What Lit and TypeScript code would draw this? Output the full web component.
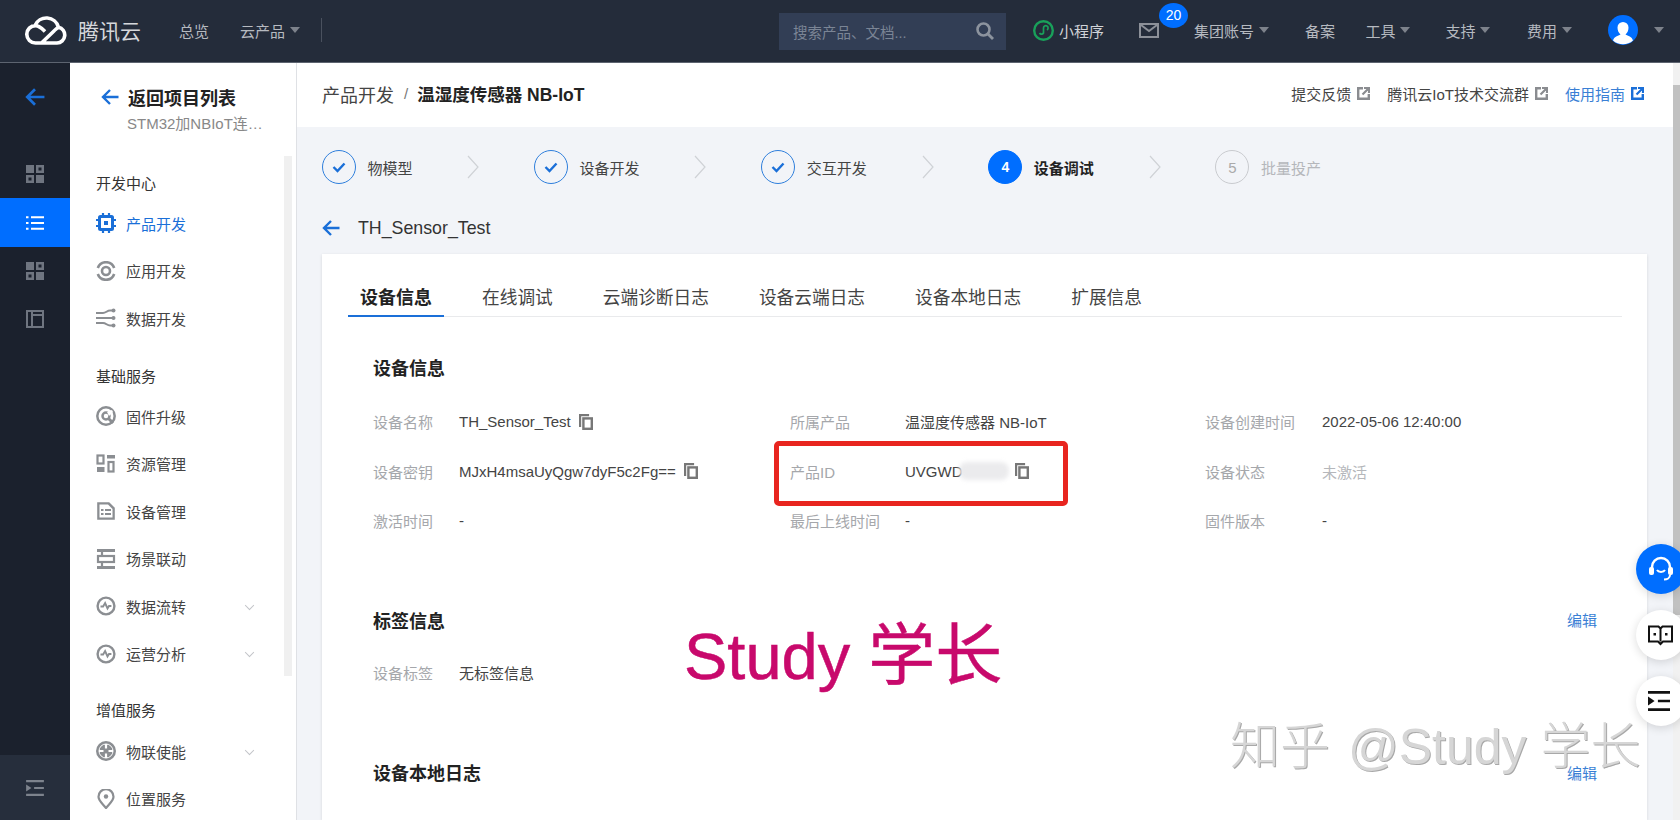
import { LitElement, html, css, svg } from "lit";
import { customElement } from "lit/decorators.js";

const ico = (w: number, h: number, vb: string, body: unknown, cls = "") =>
  html`<svg class="ic ${cls}" width=${w} height=${h} viewBox=${vb} fill="none">${body}</svg>`;

const caret = html`<i class="caret"></i>`;

const copy = ico(14, 16, "0 0 14 16", svg`<path d="M1.100 13V1.100h9" stroke="#777" stroke-width="2.200"/><rect x="4.400" y="4.400" width="8.400" height="10.400" stroke="#777" stroke-width="2.400"/>`, "copy");

const ext = (c: string) => ico(13, 13, "0 0 13 13", svg`<path d="M6 1.200H1.200v10.600h10.600V7" stroke=${c} stroke-width="2.400"/><path d="M5.500 7.500 11 2M7 1h5v5" stroke=${c} stroke-width="2.200"/>`);

const grid = ico(18, 18, "0 0 18 18", svg`<rect width="8" height="8" fill="#6f7580"/><rect x="10" width="8" height="8" fill="#6f7580"/><rect y="10" width="8" height="8" fill="#6f7580"/><rect x="10" y="10" width="8" height="8" fill="#6f7580"/><rect x="12.500" y="2.500" width="3" height="3" fill="#1b212d"/><rect x="2.500" y="12.500" width="3" height="3" fill="#1b212d"/>`);

const g = "#8b8e92";
const wave = svg`<circle cx="10" cy="10" r="8.400" stroke=${g} stroke-width="2.400"/><path d="M4.500 10.500h2.600l2-3.500 2.400 5.500 1.500-2.500h2.400" stroke=${g} stroke-width="1.900"/>`;
const icons: Record<string, unknown> = {
  chip: svg`<rect x="3.500" y="3.500" width="13" height="13" rx="1" stroke="#1a6fd8" stroke-width="3"/><rect x="8" y="8" width="4" height="4" fill="#1a6fd8"/><path d="M7 0v3M13 0v3M7 17v3M13 17v3M0 7h3M0 13h3M17 7h3M17 13h3" stroke="#1a6fd8" stroke-width="2.200"/>`,
  app: svg`<circle cx="10" cy="10" r="4" stroke=${g} stroke-width="2.600"/><path d="M1.800 7a8.700 8.700 0 0 1 16.400 0M18.200 13a8.700 8.700 0 0 1-16.400 0" stroke=${g} stroke-width="2.600"/>`,
  data: svg`<path d="M0 5h7c3 0 4-2.500 7-2.500h3M0 10h17M0 15h7c3 0 4 2.500 7 2.500h3" stroke=${g} stroke-width="2"/><circle cx="17.500" cy="2.500" r="2" fill=${g}/><circle cx="17.500" cy="10" r="2" fill=${g}/><circle cx="17.500" cy="17.500" r="2" fill=${g}/>`,
  fw: svg`<circle cx="10" cy="10" r="8.700" stroke=${g} stroke-width="2.500"/><circle cx="10" cy="10" r="3.500" stroke=${g} stroke-width="2.500"/><path d="m12 12 5 5" stroke=${g} stroke-width="3"/><path d="M11 6l5-2 1 2-4 4z" fill="#fff"/>`,
  res: svg`<rect x="1.500" y="1.500" width="6" height="8" stroke=${g} stroke-width="2.200"/><rect x="11" y="1" width="8" height="3.500" fill=${g}/><rect x="1" y="13" width="7.500" height="5" fill=${g}/><rect x="12.500" y="8" width="5" height="9.500" stroke=${g} stroke-width="2.200"/>`,
  dev: svg`<path d="M1.200 18.800V1.200h12l5.600 5.600v12z" fill=${g}/><path d="M3.500 3.500h8.500l4.500 4.500v8.500H3.500z" fill="#fff"/><rect x="5" y="8" width="2.500" height="2" fill=${g}/><rect x="9" y="8" width="6" height="2" fill=${g}/><rect x="5" y="12" width="2.500" height="2" fill=${g}/><rect x="9" y="12" width="6" height="2" fill=${g}/>`,
  scene: svg`<path d="M1 1.500h18M1 18.500h18" stroke=${g} stroke-width="3"/><rect x="2" y="7" width="16" height="6" stroke=${g} stroke-width="2.200"/><path d="M6 2v5M6 13v5" stroke=${g} stroke-width="2.200"/>`,
  wave,
  iot: svg`<circle cx="10" cy="10" r="10" fill=${g}/><circle cx="10" cy="10" r="7" stroke="#fff" stroke-width="1"/><path d="M10 3v14M3 10h14" stroke="#fff" stroke-width="2.200"/><rect x="7.500" y="7.500" width="5" height="5" fill=${g}/>`,
  pin: svg`<path d="M10 19C6 14 2.500 11.500 2.500 7.700a7.500 7.500 0 0 1 15 0c0 3.800-3.500 6.300-7.500 11.300z" stroke=${g} stroke-width="2.200"/><circle cx="10" cy="7.500" r="2.200" fill=${g}/>`,
};

type Item = { t: string; i: string; on?: boolean; more?: boolean };
const side: { h: string; c: string; items: Item[] }[] = [
  { h: "开发中心", c: "first", items: [{ t: "产品开发", i: "chip", on: true }, { t: "应用开发", i: "app" }, { t: "数据开发", i: "data" }] },
  { h: "基础服务", c: "mid", items: [{ t: "固件升级", i: "fw" }, { t: "资源管理", i: "res" }, { t: "设备管理", i: "dev" }, { t: "场景联动", i: "scene" }, { t: "数据流转", i: "wave", more: true }, { t: "运营分析", i: "wave", more: true }] },
  { h: "增值服务", c: "last", items: [{ t: "物联使能", i: "iot", more: true }, { t: "位置服务", i: "pin" }] },
];

const backArrow = (w: number) => ico(w, w - 2, "0 0 18 16", svg`<path d="M17.500 8H2M9 1 2 8l7 7" stroke="#1a6fd8" stroke-width="2.400"/>`);
const chev = ico(12, 24, "0 0 12 24", svg`<path d="m1 1 10 11L1 23" stroke="#cfd2d6" stroke-width="1.200"/>`, "chev");
const check = ico(14, 11, "0 0 14 11", svg`<path d="m1.500 5 4 4 7-7.500" stroke="#1a6fd8" stroke-width="2.400"/>`);
const indent = (c: string, w: number) => ico(w, w - 2, "0 0 20 18", svg`<path d="M0 1.200h20M9 9h11M0 16.800h20" stroke=${c} stroke-width="2.400"/><path d="M0 5l6 4-6 4z" fill=${c}/>`);

@customElement("app-root")
export class AppRoot extends LitElement {
  static styles = css`
    :host { display: block; position: relative; width: 1680px; height: 820px; overflow: hidden; font-family: "Liberation Sans", "Noto Sans CJK SC", sans-serif; font-size: 15px; color: #333; }
    .ic { display: block; flex: none; }
    .top { height: 63px; box-sizing: border-box; border-bottom: 1px solid #5d6470; background: #242c3a; display: flex; align-items: center; padding: 0 16px 2px 25px; color: #b6bac0; white-space: nowrap; }
    .brand { font-size: 21px; color: #d6d8dc; margin-left: 11px; }
    .caret { display: block; flex: none; width: 0; height: 0; border: 5px solid transparent; border-top: 6px solid #7d828b; border-bottom: 0; margin-left: 5px; }
    .sep { width: 1px; height: 24px; background: #4a515e; margin-left: 21px; }
    .search { margin-left: auto; margin-top: 2px; width: 227px; height: 37px; box-sizing: border-box; background: #323e55; display: flex; align-items: center; justify-content: space-between; padding: 0 12px 0 14px; color: #7b8595; font-size: 14.500px; }
    .mail { position: relative; }
    .badge { position: absolute; left: 20px; top: -20px; width: 29px; height: 25px; border-radius: 50%; background: #006eff; color: #fff; font-size: 14px; display: flex; align-items: center; justify-content: center; }
    .body { display: flex; height: 757px; }
    .rail { width: 70px; flex: none; background: #1b212d; display: flex; flex-direction: column; align-items: center; }
    .rail-back { height: 67px; display: flex; align-items: center; margin-bottom: 20px; }
    .rail-row { height: 48px; width: 100%; display: flex; align-items: center; justify-content: center; }
    .rail-row.on { height: 49px; background: #006eff; }
    .rail-row.g2 { height: 47px; }
    .rail-row.p { height: 49px; }
    .rail-foot { margin-top: auto; width: 100%; height: 65px; background: #262e3c; display: flex; align-items: center; justify-content: center; }
    .side { width: 227px; flex: none; box-sizing: border-box; border-right: 1px solid #dfe1e5; padding-left: 26px; background: #fff; overflow: hidden; }
    .back { display: flex; align-items: center; height: 24px; margin-top: 22px; font-size: 18px; font-weight: 700; color: #222; margin-left: 5px; gap: 9px; }
    .sub { margin: 4px 0 0 31px; color: #888; line-height: 22px; height: 22px; }
    .sech { line-height: 24px; color: #333; margin-top: 21px; margin-bottom: 3.500px; }
    .sech.first { margin-top: 37px; }
    .sech.mid { margin-top: 23px; }
    .sech.last { margin-top: 21px; margin-bottom: 5px; }
    .item { height: 47.500px; display: flex; align-items: center; gap: 10px; color: #444; position: relative; }
    .item.on { color: #1a6fd8; }
    .more { position: absolute; left: 150px; top: 19px; width: 6px; height: 6px; border-right: 1px solid #c2c4c8; border-bottom: 1px solid #c2c4c8; transform: rotate(45deg) scale(.95); }
    .main { flex: 1; background: #f2f4f8; display: flex; flex-direction: column; min-width: 0; }
    .head { height: 64px; flex: none; box-sizing: border-box; background: #fff; display: flex; align-items: center; padding: 0 36px 3px 25px; }
    .crumb { font-size: 18px; color: #444; }
    .slash { margin: 0 9px 0 10px; color: #777; font-size: 15px; }
    .crumb-b { font-size: 17.500px; font-weight: 700; color: #222; }
    .links { margin-left: auto; display: flex; align-items: center; color: #444; }
    .links span { margin-left: 17px; margin-right: 6px; }
    .links .blue { color: #3a7fd5; }
    .steps { display: flex; align-items: center; margin: 23px 0 0 25px; height: 34px; }
    .circ { width: 34px; height: 34px; box-sizing: border-box; border-radius: 50%; border: 1px solid #2f7fdc; display: flex; align-items: center; justify-content: center; flex: none; }
    .circ.cur { background: #006eff; border-color: #006eff; color: #fff; font-weight: 700; font-size: 14px; }
    .circ.off { border-color: #c9cbcf; color: #aaa; font-size: 15px; }
    .st { margin-left: 11.500px; color: #444; }
    .st.cur { font-weight: 700; color: #222; }
    .st.off { color: #b5b7bb; }
    .chev { margin: 0 54.800px; }
    .title { display: flex; align-items: center; margin: 32px 0 0 25px; height: 24px; gap: 18px; font-size: 17.800px; color: #333; }
    .card { margin: 14px 33px 0 25px; flex: 1; background: #fff; box-shadow: 0 1px 3px rgba(0,0,0,.12); padding: 0 25px 0 26px; overflow: hidden; }
    .tabs { height: 63px; box-sizing: border-box; border-bottom: 1px solid #e9eaec; display: flex; align-items: flex-end; gap: 26px; }
    .tab { font-size: 17.700px; color: #444; height: 40px; padding: 0 12px; line-height: 42px; box-sizing: border-box; margin-bottom: -1px; border-bottom: 2px solid transparent; }
    .tab.on { font-size: 18px; font-weight: 700; color: #222; border-bottom-color: #1a6fd8; }
    .sect { display: flex; justify-content: space-between; margin-left: 25px; margin-right: 25px; height: 24px; align-items: center; font-size: 18px; font-weight: 700; color: #222; }
    .sect.s1 { margin-top: 38px; }
    .sect.s2 { margin-top: 62px; }
    .sect.s3 { margin-top: 63px; }
    .edit { font-size: 15px; font-weight: 400; color: #3a7fd5; }
    .rows { display: grid; grid-template-columns: 86px 331px 115px 300px 117px 1fr; grid-auto-rows: 49.500px; align-items: center; margin: 18px 0 0 25px; }
    .rows.tight { margin-top: 16px; }
    .lab { color: #a5a7ab; }
    .val { color: #444; display: flex; align-items: center; gap: 8px; }
    .val.off { color: #b5b7bb; }
    .blob { width: 50px; height: 18px; margin-left: -12px; margin-right: -2px; background: #ebebed; border-radius: 8px; filter: blur(2px); }
    .redbox { position: absolute; left: 774px; top: 441px; width: 294px; height: 65px; box-sizing: border-box; border: 5px solid #e8251f; border-radius: 5px; }
    .study { position: absolute; left: 684px; top: 616px; font-size: 65px; line-height: 80px; color: #c8096c; white-space: nowrap; -webkit-text-stroke: .5px #c8096c; }
    .study span { font-size: 67px; }
    .mark { position: absolute; left: 1230px; top: 712px; font-size: 50px; line-height: 70px; color: #d6d6d6; text-shadow: 1px 1px 0 #a8a8a8; white-space: nowrap; font-weight: 300; }
    .mark b { font-weight: 300; margin-left: 4px; }
    .track { position: absolute; right: 0; top: 63px; width: 7px; height: 757px; background: #f1f1f1; }
    .thumb { position: absolute; left: 0; top: 22px; width: 7px; height: 530px; background: #c1c1c1; }
    .sbar { position: absolute; left: 284px; top: 156px; width: 8px; height: 520px; background: #f0f0f0; }
    .fab { position: absolute; left: 1636px; width: 50px; height: 50px; border-radius: 50%; background: #fff; box-shadow: 0 2px 10px rgba(0,0,0,.14); display: flex; align-items: center; padding-left: 12px; box-sizing: border-box; }
    .fab.blue { background: #006eff; }
  `;

  render() {
    const tabs = ["设备信息", "在线调试", "云端诊断日志", "设备云端日志", "设备本地日志", "扩展信息"];
    return html`
      <div class="top">
        ${ico(42, 30, "0 0 42 30", svg`<path d="M10.500 28H32a8 8 0 0 0 1.500-15.800A12.500 12.500 0 0 0 10 10.500M10.500 28a8.700 8.700 0 1 1 0-17.400c4 0 6.500 2.900 9.500 5.900M17 27.500l12-11.500c1.500-1.500 3-3.500 5-3.800" stroke="#fff" stroke-width="3.600"/>`)}
        <span class="brand">腾讯云</span>
        <span style="margin-left:38px">总览</span>
        <span style="margin-left:31px">云产品</span>${caret}
        <i class="sep"></i>
        <div class="search">搜索产品、文档...
          ${ico(18, 18, "0 0 18 18", svg`<circle cx="7.500" cy="7.500" r="6" stroke="#8c939e" stroke-width="2.600"/><path d="m12 12 5 5" stroke="#8c939e" stroke-width="2.800"/>`)}
        </div>
        <span style="margin-left:27px">${ico(21, 21, "0 0 21 21", svg`<circle cx="10.500" cy="10.500" r="9.300" stroke="#19a05a" stroke-width="2.400"/><path d="M6.500 13a2.300 2.300 0 0 0 4 0V8a2.300 2.300 0 1 1 3.500 2" stroke="#19a05a" stroke-width="1.700"/>`)}</span>
        <span style="margin-left:5px;color:#d0d3d7">小程序</span>
        <div class="mail" style="margin-left:35px">
          ${ico(20, 15, "0 0 20 15", svg`<rect x="1" y="1" width="18" height="13" stroke="#8c9098" stroke-width="2"/><path d="m2 2 8 6 8-6" stroke="#8c9098" stroke-width="2"/>`)}
          <span class="badge">20</span>
        </div>
        <span style="margin-left:35px">集团账号</span>${caret}
        <span style="margin-left:36px">备案</span>
        <span style="margin-left:30.500px">工具</span>${caret}
        <span style="margin-left:35px">支持</span>${caret}
        <span style="margin-left:36.500px">费用</span>${caret}
        <span style="margin-left:36px">${ico(30, 30, "0 0 30 30", svg`<circle cx="15" cy="15" r="15" fill="#006eff"/><path d="M5 25.500c1-4 5-4.500 7.500-6-2-2-3-4-3-7a5.500 5.500 0 0 1 11 0c0 3-1 5-3 7 2.500 1.500 6.500 2 7.500 6a15 15 0 0 1-20 0z" fill="#fff"/>`)}</span>
        <span style="margin-left:11px">${caret}</span>
      </div>
      <div class="body">
        <div class="rail">
          <div class="rail-back">${backArrow(20)}</div>
          <div class="rail-row">${grid}</div>
          <div class="rail-row on">${ico(18, 14, "0 0 18 14", svg`<path d="M5 1.200h13M5 7h13M5 12.800h13" stroke="#fff" stroke-width="2"/><path d="M0 1.200h2.500M0 7h2.500M0 12.800h2.500" stroke="#fff" stroke-width="2"/>`)}</div>
          <div class="rail-row g2">${grid}</div>
          <div class="rail-row p">${ico(18, 18, "0 0 18 18", svg`<rect x="1" y="1" width="16" height="16" stroke="#6f7580" stroke-width="2"/><path d="M6 1v16M6 5h11" stroke="#6f7580" stroke-width="2"/>`)}</div>
          <div class="rail-foot">${indent("#7d838d", 18)}</div>
        </div>
        <div class="side">
          <div class="back">${backArrow(18)}返回项目列表</div>
          <div class="sub">STM32加NBIoT连…</div>
          ${side.map((s) => html`
            <div class="sech ${s.c}">${s.h}</div>
            ${s.items.map((it) => html`
              <div class="item ${it.on ? "on" : ""}">
                ${ico(20, 20, "0 0 20 20", icons[it.i])}${it.t}
                ${it.more ? html`<i class="more"></i>` : ""}
              </div>`)}
          `)}
        </div>
        <div class="main">
          <div class="head">
            <span class="crumb">产品开发</span><span class="slash">/</span><span class="crumb-b">温湿度传感器 NB-IoT</span>
            <div class="links">
              <span>提交反馈</span>${ext("#8a8c90")}
              <span>腾讯云IoT技术交流群</span>${ext("#8a8c90")}
              <span class="blue">使用指南</span>${ext("#1a6fd8")}
            </div>
          </div>
          <div class="steps">
            <div class="circ">${check}</div><span class="st">物模型</span>${chev}
            <div class="circ">${check}</div><span class="st">设备开发</span>${chev}
            <div class="circ">${check}</div><span class="st">交互开发</span>${chev}
            <div class="circ cur">4</div><span class="st cur">设备调试</span>${chev}
            <div class="circ off">5</div><span class="st off">批量投产</span>
          </div>
          <div class="title">${backArrow(18)}TH_Sensor_Test</div>
          <div class="card">
            <div class="tabs">
              ${tabs.map((t, i) => html`<div class="tab ${i === 0 ? "on" : ""}">${t}</div>`)}
            </div>
            <div class="sect s1">设备信息</div>
            <div class="rows">
              <span class="lab">设备名称</span><span class="val">TH_Sensor_Test ${copy}</span>
              <span class="lab">所属产品</span><span class="val">温湿度传感器 NB-IoT</span>
              <span class="lab">设备创建时间</span><span class="val">2022-05-06 12:40:00</span>
              <span class="lab">设备密钥</span><span class="val">MJxH4msaUyQgw7dyF5c2Fg== ${copy}</span>
              <span class="lab">产品ID</span><span class="val">UVGWD<i class="blob"></i>${copy}</span>
              <span class="lab">设备状态</span><span class="val off">未激活</span>
              <span class="lab">激活时间</span><span class="val">-</span>
              <span class="lab">最后上线时间</span><span class="val">-</span>
              <span class="lab">固件版本</span><span class="val">-</span>
            </div>
            <div class="sect s2">标签信息<span class="edit">编辑</span></div>
            <div class="rows tight">
              <span class="lab">设备标签</span><span class="val">无标签信息</span>
            </div>
            <div class="sect s3">设备本地日志<span class="edit">编辑</span></div>
            <div class="rows">
              <span class="lab">日志开关</span><span class="val">关闭</span>
            </div>
          </div>
        </div>
      </div>
      <div class="sbar"></div>
      <div class="track"><div class="thumb"></div></div>
      <div class="redbox"></div>
      <div class="study">Study <span>学长</span></div>
      <div class="mark">知乎<b> </b>@Study 学长</div>
      <div class="fab blue" style="top:544px">
        ${ico(26, 26, "0 0 26 26", svg`<path d="M4 13V11a9 9 0 0 1 18 0v2" stroke="#fff" stroke-width="2.400"/><rect x="1" y="11" width="5" height="8" rx="2" fill="#fff"/><rect x="20" y="11" width="5" height="8" rx="2" fill="#fff"/><path d="M9 14c1.500 2.500 6.500 2.500 8 0M22 19c0 3-3 4.500-6 4.500" stroke="#fff" stroke-width="2"/>`)}
      </div>
      <div class="fab" style="top:610px">
        ${ico(25, 21, "0 0 25 21", svg`<path d="M1 1.500h9.500l2 2 2-2H24v15H15l-2.500 2.500L10 16.500H1zM12.500 3.500v13" stroke="#111" stroke-width="2"/><rect x="5.500" y="8" width="2.500" height="2.500" fill="#111"/><rect x="17" y="8" width="2.500" height="2.500" fill="#111"/>`)}
      </div>
      <div class="fab" style="top:676px">${indent("#111", 22)}</div>
    `;
  }
}
